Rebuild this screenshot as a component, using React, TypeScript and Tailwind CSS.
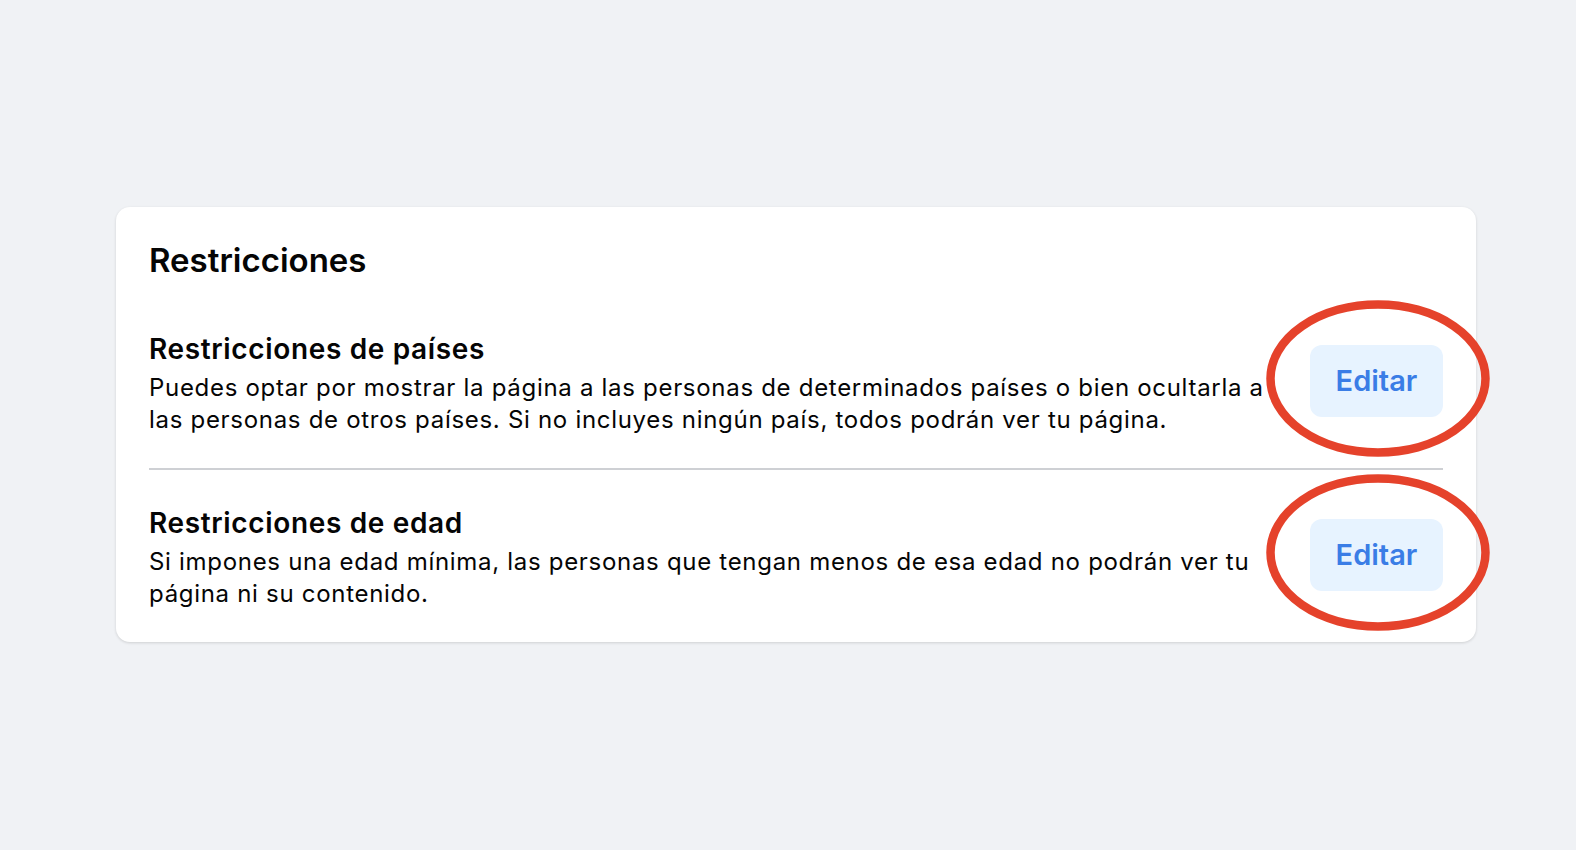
import React from "react"

type Restriction = {
  title: string
  description: string
}

const restrictions: Restriction[] = [
  {
    title: "Restricciones de países",
    description:
      "Puedes optar por mostrar la página a las personas de determinados países o bien ocultarla a las personas de otros países. Si no incluyes ningún país, todos podrán ver tu página.",
  },
  {
    title: "Restricciones de edad",
    description:
      "Si impones una edad mínima, las personas que tengan menos de esa edad no podrán ver tu página ni su contenido.",
  },
]

function Circled({ children }: { children: React.ReactNode }) {
  return (
    <div className="relative -mt-[5px]">
      {children}
      {/* red marker drawn over the button */}
      <svg
        className="pointer-events-none absolute -left-[44px] -top-[45px]"
        width="224"
        height="157"
        viewBox="0 0 224 157"
        fill="none"
      >
        <ellipse cx="112" cy="78.5" rx="107.5" ry="74" stroke="#e5422b" strokeWidth="8.5" />
      </svg>
    </div>
  )
}

function RestrictionRow({ item }: { item: Restriction }) {
  return (
    <div className="flex items-center justify-between gap-[40px] pt-[35px] pb-[32px]">
      <div className="max-w-[1125px]">
        <h3 className="text-[28px] font-semibold leading-[36px] tracking-[0.65px] text-[#050505]">{item.title}</h3>
        <p className="mt-[5px] text-[24px] leading-[32px] tracking-[0.7px] text-[#050505]">{item.description}</p>
      </div>
      <Circled>
        <button className="h-[72px] w-[133px] shrink-0 rounded-[12px] bg-[#e7f3ff] text-[29px] font-semibold text-[#3a7de6]">
          Editar
        </button>
      </Circled>
    </div>
  )
}

export default function App() {
  return (
    <div className="min-h-screen bg-[#f0f2f5] pt-[207px] font-['Inter',sans-serif]">
      <div className="ml-[116px] w-[1360px] rounded-[14px] bg-white px-[33px] pt-[31px] pb-0 shadow-[0_1px_3px_rgba(0,0,0,0.14)]">
        <h2 className="mb-[14px] text-[33px] font-semibold leading-[44px] text-[#050505]">Restricciones</h2>
        <RestrictionRow item={restrictions[0]} />
        <div className="h-[2px] bg-[#ced0d4]" />
        <RestrictionRow item={restrictions[1]} />
      </div>
    </div>
  )
}
